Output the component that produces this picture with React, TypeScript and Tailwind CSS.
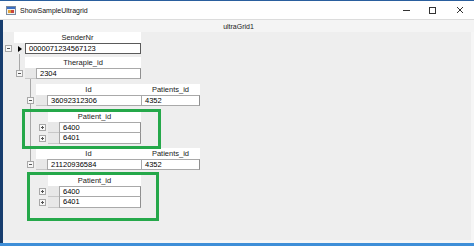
import React from "react";

const Exp = ({ plus }: { plus?: boolean }) => (
  <div className="relative w-[7px] h-[7px] border border-[#a8a8a8] bg-[#f8f8f8] flex items-center justify-center">
    <div className="absolute w-[3px] h-px bg-[#555]" />
    {plus && <div className="absolute w-px h-[3px] bg-[#555]" />}
  </div>
);

const Cell = ({ w, children, first, last }: { w: string; children?: React.ReactNode; first?: boolean; last?: boolean }) => (
  <div
    className={`${w} h-full bg-white border-l border-b border-[#a9a9a9] flex items-center pl-[3px] ${first ? "border-t" : ""} ${last ? "border-r border-r-[#8f8f8f]" : ""}`}
  >
    {children}
  </div>
);

export default function App() {
  return (
    <div className="w-[474px] h-[246px] flex flex-col bg-[#efefef] overflow-hidden font-['Liberation_Sans',Arial,sans-serif] text-[7.5px] leading-none text-black">
      {/* title bar */}
      <div className="h-[20px] shrink-0 bg-white border-t border-[#2a5f9e] border-b border-b-[#dcdcdc] flex items-center">
        <svg width="10" height="10" viewBox="0 0 10 10" className="ml-[6px] mr-[4px]">
          <rect x="0.5" y="1.5" width="9" height="8" fill="#f2f2f2" stroke="#7a8aa0" strokeWidth="1" />
          <rect x="1" y="2" width="8" height="2" fill="#3b6fc4" />
          <rect x="2" y="5" width="3" height="3" fill="#e2a43a" />
          <rect x="5" y="5" width="3" height="3" fill="#c9463d" />
        </svg>
        <span className="text-[7px] text-[#111]">ShowSampleUltragrid</span>
        <div className="flex-1" />
        <svg width="474" height="18" viewBox="0 0 474 18" className="absolute left-0 top-[1px] pointer-events-none">
          <line x1="403" y1="9.5" x2="410" y2="9.5" stroke="#333" strokeWidth="1" />
          <rect x="429.5" y="6.5" width="6" height="6" fill="none" stroke="#333" strokeWidth="1" />
          <line x1="457" y1="6" x2="463" y2="12" stroke="#333" strokeWidth="1" />
          <line x1="463" y1="6" x2="457" y2="12" stroke="#333" strokeWidth="1" />
        </svg>
      </div>

      {/* body */}
      <div className="flex-1 flex min-h-0">
        <div className="w-[3px] bg-[#173d6e]" />
        <div className="flex-1 flex flex-col min-w-0">
          <div className="h-[12px] shrink-0 bg-[#f4f4f4] flex items-center justify-center text-[7px] text-[#222]">
            ultraGrid1
          </div>
          <div className="flex-1 relative bg-[#eeeeee] border-r-[3px] border-r-[#f6f6f6] border-b-[3px] border-b-[#f6f6f6] flex flex-col">
            {/* tree lines */}
            <svg className="absolute left-0 top-0 pointer-events-none" width="200" height="180">
              <line x1="16.5" y1="22" x2="16.5" y2="38" stroke="#a8a8a8" />
              <line x1="27.5" y1="47" x2="27.5" y2="130" stroke="#a8a8a8" />
            </svg>

            {/* SenderNr band */}
            <div className="ml-[11px] w-[127px] h-[11px] bg-white flex items-center justify-center text-[#1a1a1a]">
              SenderNr
            </div>
            <div className="flex h-[11px]">
              <div className="w-[11px] flex items-center justify-center">
                <Exp />
              </div>
              <div className="w-[11px] bg-[#ececec] flex items-center justify-center">
                <svg width="4" height="6" viewBox="0 0 4 6">
                  <path d="M0 0 L4 3 L0 6 Z" fill="#000" />
                </svg>
              </div>
              <div className="w-[116px] h-full bg-white border border-[#5a5a5a] flex items-center pl-[3px]">
                0000071234567123
              </div>
            </div>

            {/* Therapie band */}
            <div className="mt-[3px] ml-[22px] w-[116px] h-[11px] bg-white flex items-center justify-center text-[#1a1a1a]">
              Therapie_id
            </div>
            <div className="flex h-[11px] ml-[11px]">
              <div className="w-[11px] flex items-center justify-center">
                <Exp />
              </div>
              <div className="w-[11px] bg-[#e8e8e8] border-b border-[#c8c8c8]" />
              <Cell w="w-[105px]" first last>2304</Cell>
            </div>

            {/* Id band 1 */}
            <div className="mt-[5px] ml-[33px] w-[164px] h-[11px] bg-white flex text-[#1a1a1a]">
              <div className="w-[105px] flex items-center justify-center">Id</div>
              <div className="w-[59px] flex items-center justify-center">Patients_id</div>
            </div>
            <div className="flex h-[11px] ml-[22px]">
              <div className="w-[11px] flex items-center justify-center">
                <Exp />
              </div>
              <div className="w-[11px] bg-[#e8e8e8] border-b border-[#c8c8c8]" />
              <Cell w="w-[94px]" first>36092312306</Cell>
              <Cell w="w-[59px]" first last>4352</Cell>
            </div>

            {/* Patient band 1 */}
            <div className="mt-[5px] ml-[45px] w-[93px] h-[11px] bg-white flex items-center justify-center text-[#1a1a1a]">
              Patient_id
            </div>
            {["6400", "6401"].map((v, i) => (
              <div key={v} className="flex h-[11px] ml-[33px]">
                <div className="w-[12px] flex items-center justify-center">
                  <Exp plus />
                </div>
                <div className="w-[11px] bg-[#e8e8e8] border-b border-[#c8c8c8]" />
                <Cell w="w-[82px]" first={i === 0} last>{v}</Cell>
              </div>
            ))}

            {/* Id band 2 */}
            <div className="mt-[4px] ml-[33px] w-[164px] h-[11px] bg-white flex text-[#1a1a1a]">
              <div className="w-[105px] flex items-center justify-center">Id</div>
              <div className="w-[59px] flex items-center justify-center">Patients_id</div>
            </div>
            <div className="flex h-[11px] ml-[22px]">
              <div className="w-[11px] flex items-center justify-center">
                <Exp />
              </div>
              <div className="w-[11px] bg-[#e8e8e8] border-b border-[#c8c8c8]" />
              <Cell w="w-[94px]" first>21120936584</Cell>
              <Cell w="w-[59px]" first last>4352</Cell>
            </div>

            {/* Patient band 2 */}
            <div className="mt-[5px] ml-[45px] w-[93px] h-[11px] bg-white flex items-center justify-center text-[#1a1a1a]">
              Patient_id
            </div>
            {["6400", "6401"].map((v, i) => (
              <div key={v + "b"} className="flex h-[11px] ml-[33px]">
                <div className="w-[12px] flex items-center justify-center">
                  <Exp plus />
                </div>
                <div className="w-[11px] bg-[#e8e8e8] border-b border-[#c8c8c8]" />
                <Cell w="w-[82px]" first={i === 0} last>{v}</Cell>
              </div>
            ))}

            {/* green annotation boxes */}
            <div className="absolute left-[19px] top-[77px] w-[139px] h-[40px] border-[3px] border-[#25a84a] pointer-events-none" />
            <div className="absolute left-[24px] top-[140px] w-[132px] h-[49px] border-[3px] border-[#25a84a] pointer-events-none" />
          </div>
        </div>
      </div>
      <div className="h-[3px] shrink-0 bg-[#3f8fd8]" />
    </div>
  );
}
